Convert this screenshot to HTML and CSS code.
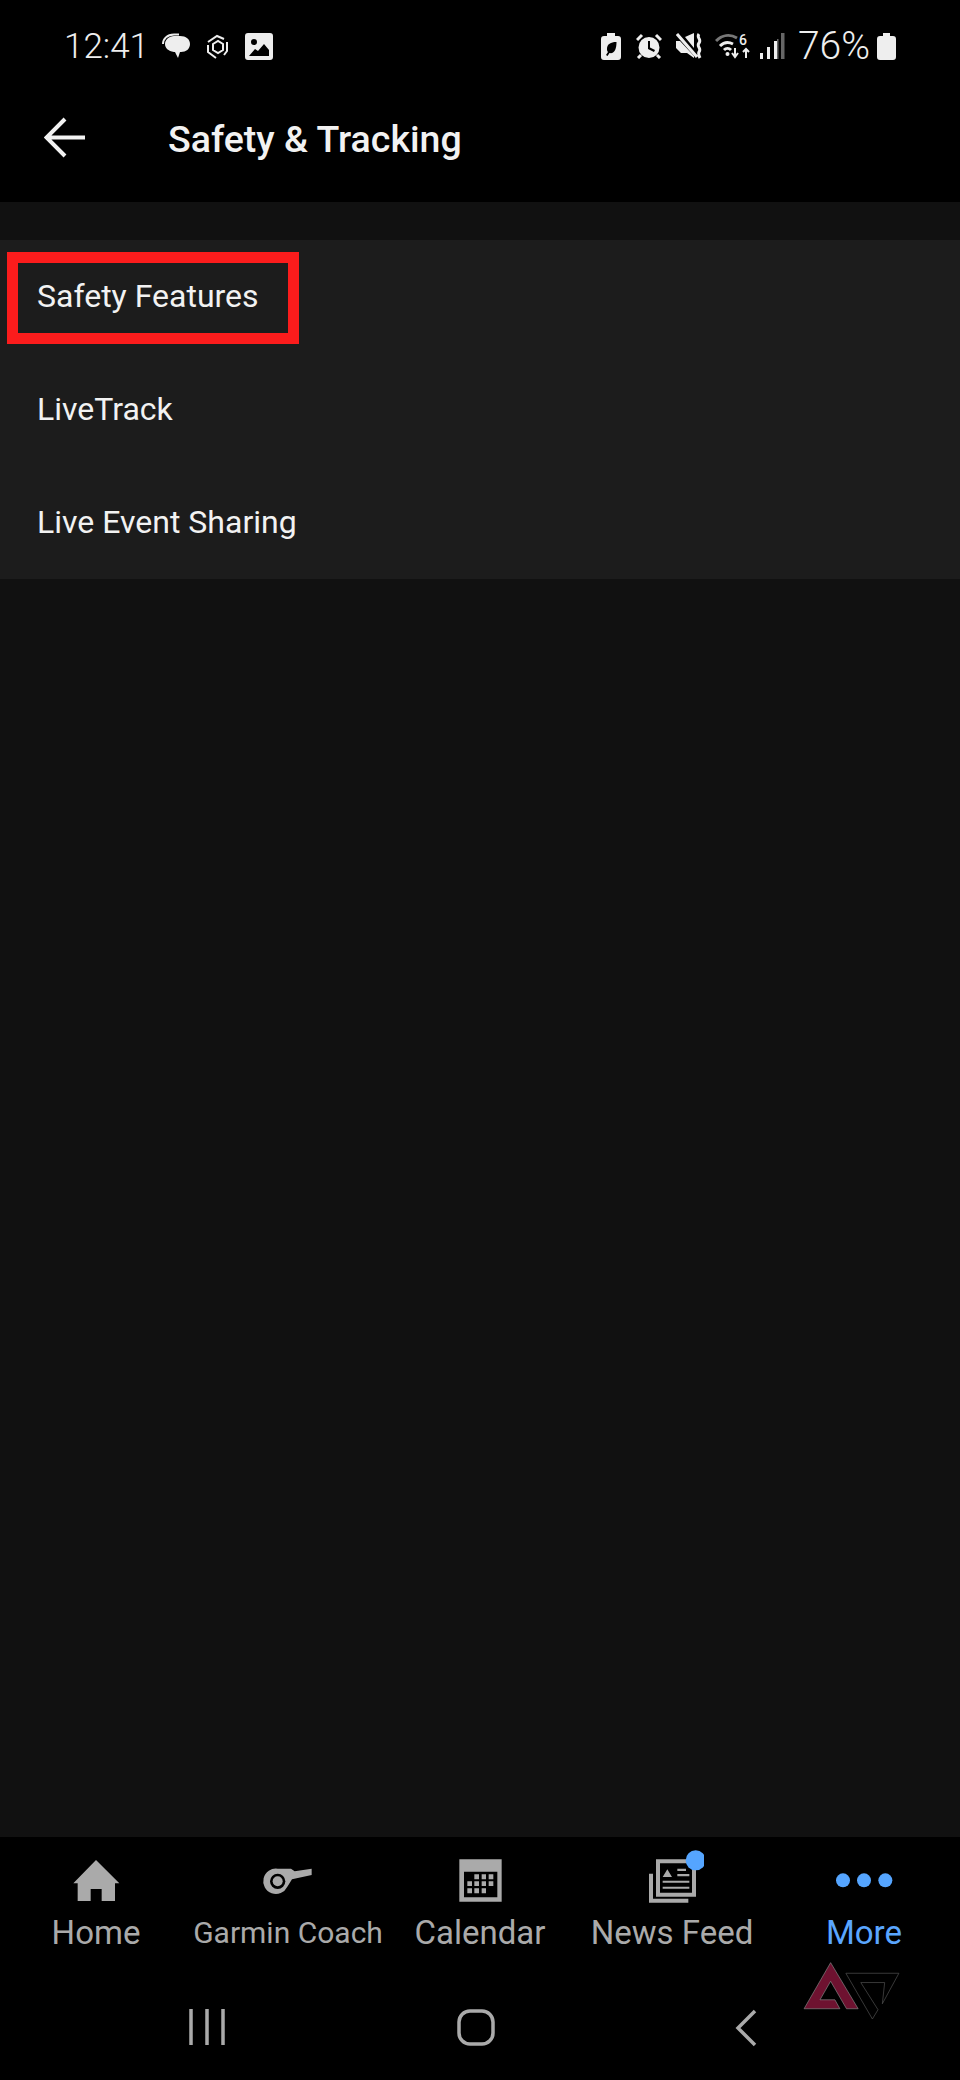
FILE: index.html
```html
<!DOCTYPE html>
<html lang="en">
<head>
    <meta charset="UTF-8">
    <meta name="viewport" content="width=device-width, initial-scale=1.0">
    <title>Safety &amp; Tracking</title>
    <link rel="stylesheet" href="styles.css">
</head>
<body>

    <!-- Status Bar -->
    <div class="status-bar">
        <span class="clock">12:41</span>
        <svg class="ic-bubble" viewBox="0 0 28 26"><path class="solid" d="M12 3h6c6 0 10 3 10 8s-4 8-9 8h-1l-2 6-3-6h-1C6 18 3 15 3 11s4-8 9-8z"/><path class="line" d="M1 11C1 6 5 1.500 12 1.500h5"/></svg>
        <svg class="ic-hex" viewBox="0 0 23 25"><path class="line" d="M2 8 11 2l7 3M21 8v9l-3 4M2 11v7l8 6M7 10l5-3 5 3v6l-5 3-5-3z"/></svg>
        <svg class="ic-photo" viewBox="0 0 28 27"><path class="solid" fill-rule="evenodd" d="M3 0h22a3 3 0 0 1 3 3v21a3 3 0 0 1-3 3H3a3 3 0 0 1-3-3V3a3 3 0 0 1 3-3zM9 6a3 3 0 1 0 0 6 3 3 0 0 0 0-6zM4 23h20v-6l-5-6-6 7-3-2z"/></svg>

        <div class="status-right">
            <svg class="ic-battery-leaf" viewBox="0 0 20 27"><path class="solid" fill-rule="evenodd" d="M6 0h8v3h3a3 3 0 0 1 3 3v18a3 3 0 0 1-3 3H3a3 3 0 0 1-3-3V6a3 3 0 0 1 3-3h3zM15 9c-5 0-9 2-9 7 0 1 0 2 1 3l-2 3 1.500 1 2-3c5 1 7-4 7-11z"/></svg>
            <svg class="ic-alarm" viewBox="0 0 26 26"><path class="solid" fill-rule="evenodd" d="M13 4a10.500 10.500 0 1 1 0 21 10.500 10.500 0 0 1 0-21zM12 8v8l6 3 1-2-5-2.500V8z"/><path class="line thick" d="M1 7l5-5M25 7l-5-5M5 22l-3 3M21 22l3 3"/></svg>
            <svg class="ic-mute" viewBox="0 0 26 26"><path class="solid" d="M0 8h4l14 15v2l-7-5H5L0 15zM9 4l9-4v15z"/><path class="line thick" d="M1 1l20 23M23 1c-3 4 3 5 0 9s3 5 0 9c-1 2 0 4 1 6"/></svg>
            <svg class="ic-wifi" viewBox="0 0 36 26"><path class="line dim" d="M1 8c6-6 14-7 21-3"/><path class="line thick" d="M5 13c4-4 9-4 13-2M9 17c2-2 5-2 7 0"/><circle class="solid" cx="12.500" cy="21" r="2"/><text class="wifi-six" x="24" y="12">6</text><path class="line" d="M20 15v9M17 20l3 4 3-4M31 25v-9M28 19l3-3 3 3"/></svg>
            <svg class="ic-signal" viewBox="0 0 25 26"><path class="solid" d="M0 20h3v6H0zM7 14h3v12H7zM14 8h3v18h-3z"/><path class="solid dim-fill" d="M17 6h1.500v20H17zM21 0h3.500v26H21z"/></svg>
            <span class="battery-pct">76%</span>
            <svg class="ic-battery" viewBox="0 0 19 27"><path class="solid" d="M6 0h7v3h3a3 3 0 0 1 3 3v18a3 3 0 0 1-3 3H3a3 3 0 0 1-3-3V6a3 3 0 0 1 3-3h3z"/></svg>
        </div>
    </div>

    <!-- App Bar -->
    <header class="app-bar">
        <svg class="back-arrow" viewBox="0 0 42 42"><path d="M41 20.500H3M21 2 2.500 20.500 21 39"/></svg>
        <h1>Safety &amp; Tracking</h1>
    </header>

    <!-- Menu List -->
    <main class="content">
        <ul class="menu">
            <li class="menu-item">Safety Features<span class="callout"></span></li>
            <li class="menu-item">LiveTrack</li>
            <li class="menu-item">Live Event Sharing</li>
        </ul>
    </main>

    <!-- Bottom Tabs -->
    <nav class="tabs">
        <div class="tab">
            <svg class="tab-icon" viewBox="0 90 192 168"><path d="M96 120 166 190H153V243H113V207H80V243H41V190H28Z"/></svg>
            <span class="tab-label">Home</span>
        </div>
        <div class="tab">
            <svg class="tab-icon" viewBox="0 90 192 168"><path d="M65 146H105L116 154 167 146V165L108 178 94 200A38 38 0 1 1 65 146Z"/><circle class="cut" cx="65" cy="184" r="23"/><circle cx="65" cy="184" r="15"/></svg>
            <span class="tab-label coach">Garmin Coach</span>
        </div>
        <div class="tab">
            <svg class="tab-icon" viewBox="0 90 192 168">
                <path fill-rule="evenodd" d="M34 118H161V245H34ZM48 155V232H148V155Z"/>
                <path d="M79 163h14v15H79zM101 163h13v15h-13zM122 163h14v15h-14zM58 184h14v14H58zM79 184h14v14H79zM101 184h13v14h-13zM122 184h14v14h-14zM58 205h14v15H58zM79 205h14v15H79zM101 205h13v15h-13z"/>
            </svg>
            <span class="tab-label">Calendar</span>
        </div>
        <div class="tab">
            <svg class="tab-icon" viewBox="0 90 192 168">
                <path fill-rule="evenodd" d="M48 118H168V230H48ZM60 130V218H156V130Z"/>
                <path d="M27 161H39V236H145V248H27Z"/>
                <path d="M82 148 96 171H68ZM112 146H138V153H112ZM112 162H148V169H112ZM68 182H148V188H68ZM68 200H148V206H68Z"/>
                <circle class="badge" cx="167" cy="121" r="30"/>
            </svg>
            <span class="tab-label">News Feed</span>
        </div>
        <div class="tab active">
            <svg class="tab-icon" viewBox="0 90 192 168"><circle cx="33" cy="181" r="21"/><circle cx="96" cy="181" r="21"/><circle cx="160" cy="181" r="21"/></svg>
            <span class="tab-label">More</span>
        </div>
    </nav>

    <!-- System Navigation -->
    <div class="system-nav">
        <svg class="nav-recents" viewBox="0 0 36 36"><path d="M2 0v36M18 0v36M34 0v36"/></svg>
        <svg class="nav-home" viewBox="0 0 38 37"><rect x="2" y="2" width="34" height="33" rx="11"/></svg>
        <svg class="nav-back" viewBox="0 0 22 38"><path d="M20 2 3 19l17 17"/></svg>
    </div>

    <!-- Watermark -->
    <svg class="watermark" viewBox="960 420 310 190">
        <path class="mark-a" d="M1052 428 1135 567H1100L1052 484 1020 540H1065L1080 567H972Z"/>
        <path class="mark-v" d="M1098 460H1258L1208 552 1215 488H1143L1195 570 1178 598Z"/>
    </svg>

</body>
</html>
```

FILE: styles.css
```css
/* General Styles */
* {
    box-sizing: border-box;
}

body {
    margin: 0;
    height: 2080px;
    display: flex;
    flex-direction: column;
    position: relative;
    overflow: hidden;
    background-color: #000;
    color: #f2f2f2;
    font-family: Roboto, sans-serif;
}

svg {
    display: block;
    flex: none;
}

/* Status Bar */
.status-bar {
    height: 68px;
    display: flex;
    align-items: center;
    padding: 24px 64px 0 64px;
    color: #eee;
}

.clock,
.battery-pct {
    font-weight: 300;
    line-height: 1;
}

.clock {
    font-size: 35px;
}

.battery-pct {
    font-size: 39px;
}

.solid {
    fill: #eee;
    stroke: none;
}

.dim-fill {
    fill: #666;
}

.line {
    fill: none;
    stroke: #eee;
    stroke-width: 2;
}

.line.thick {
    stroke-width: 3;
}

.line.dim {
    stroke: #777;
    stroke-width: 3;
}

.wifi-six {
    fill: #eee;
    font-size: 14px;
    font-weight: 500;
}

.ic-bubble { width: 28px; height: 26px; margin-left: 13px; }
.ic-hex { width: 23px; height: 25px; margin-left: 16px; }
.ic-photo { width: 28px; height: 27px; margin-left: 16px; }

.status-right {
    margin-left: auto;
    display: flex;
    align-items: center;
}

.ic-battery-leaf { width: 20px; height: 27px; }
.ic-alarm { width: 26px; height: 26px; margin-left: 15px; }
.ic-mute { width: 26px; height: 26px; margin-left: 14px; }
.ic-wifi { width: 36px; height: 26px; margin-left: 13px; }
.ic-signal { width: 25px; height: 26px; margin-left: 9px; }
.battery-pct { margin-left: 13px; }
.ic-battery { width: 19px; height: 27px; margin-left: 7px; }

/* App Bar */
.app-bar {
    height: 134px;
    display: flex;
    align-items: center;
    padding: 8px 0 0 44px;
}

.back-arrow {
    width: 42px;
    height: 42px;
    margin-top: -3px;
}

.back-arrow path {
    fill: none;
    stroke: #f2f2f2;
    stroke-width: 4;
}

.app-bar h1 {
    margin: 0 0 0 82px;
    font-size: 37.5px;
    font-weight: 500;
}

/* Menu List */
.content {
    flex: 1;
    padding-top: 38px;
    background-color: #111;
}

.menu {
    margin: 0;
    padding: 0;
    list-style: none;
    background-color: #1c1c1c;
}

.menu-item {
    position: relative;
    height: 113px;
    padding-left: 37px;
    font-size: 32px;
    line-height: 113px;
}

.callout {
    position: absolute;
    left: 7px;
    top: 12px;
    width: 292px;
    height: 92px;
    border: 11px solid #fb1c1c;
}

/* Bottom Tabs */
.tabs {
    height: 146px;
    display: flex;
    padding-top: 13px;
}

.tab {
    flex: 1;
    display: flex;
    flex-direction: column;
    align-items: center;
    color: #aaa;
}

.tab-icon {
    width: 64px;
    height: 56px;
    fill: #aaa;
}

.tab-icon .cut {
    fill: #000;
}

.tab-icon .badge {
    fill: #55a5ff;
}

.tab-label {
    margin-top: 9px;
    font-size: 33px;
    line-height: 36px;
    white-space: nowrap;
}

.tab-label.coach {
    font-size: 30px;
}

.tab.active {
    color: #5aa6ff;
}

.tab.active .tab-icon {
    fill: #55a5ff;
}

/* System Navigation */
.system-nav {
    height: 97px;
    display: flex;
    align-items: flex-start;
    padding: 26px 0 0 189px;
}

.system-nav path,
.system-nav rect {
    fill: none;
    stroke: #aaa;
    stroke-width: 3.5;
}

.nav-recents { width: 36px; height: 36px; }
.nav-home { width: 38px; height: 37px; margin-left: 232px; }
.nav-back { width: 22px; height: 38px; margin-left: 240px; }

/* Watermark */
.watermark {
    position: absolute;
    left: 800px;
    top: 1960px;
    width: 103px;
    height: 63px;
}

.mark-a {
    fill: #6e1230;
    stroke: #888;
    stroke-width: 2;
}

.mark-v {
    fill: none;
    stroke: #555;
    stroke-width: 2;
}
```
